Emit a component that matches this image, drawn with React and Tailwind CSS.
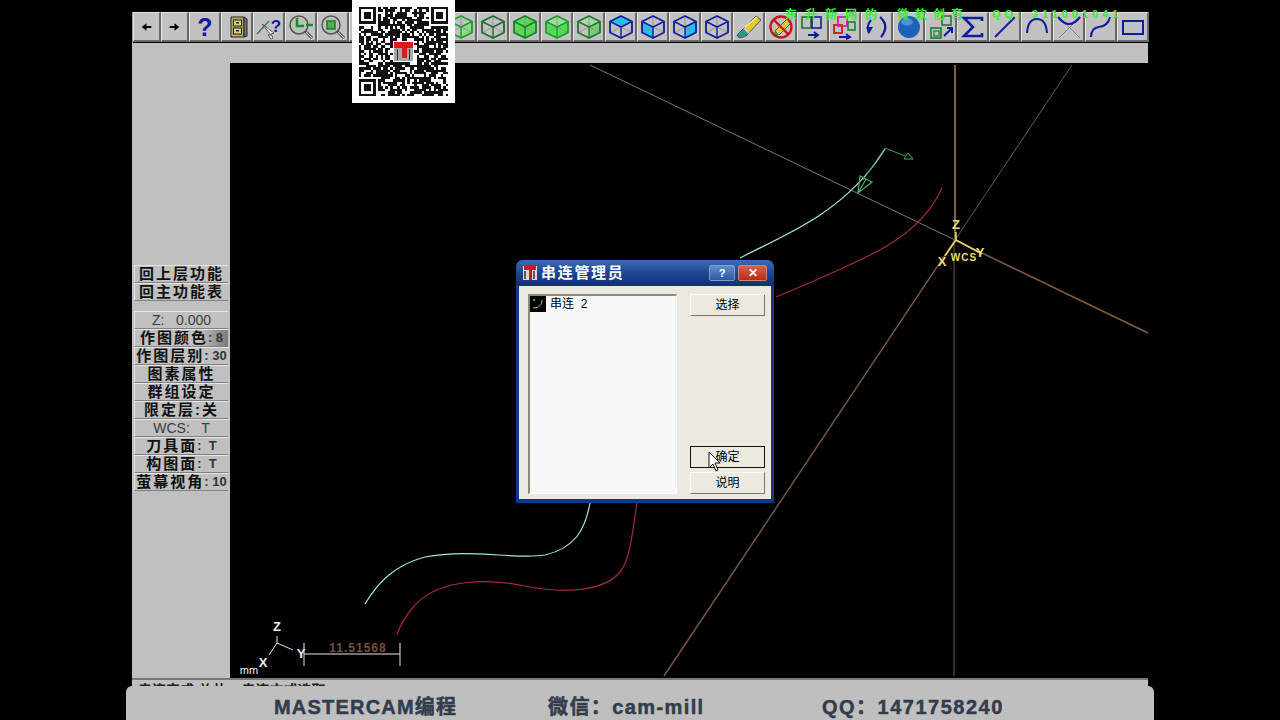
import React from 'react';

const cjk = { fontFamily: '"Liberation Sans", "Noto Sans CJK SC", sans-serif' };

// toolbar button, icons are drawn on a 26x26 grid
function Tool({ wide, children }) {
    return (
        <div className={`${wide ? 'w-[28px]' : 'w-[32px]'} h-[30px] shrink-0 flex items-center justify-center bg-[#c2c2c2] border-t border-l border-t-[#e4e4e4] border-l-[#e4e4e4] border-r-2 border-b-2 border-r-[#6a6a6a] border-b-[#6a6a6a]`}>
            <svg width="26" height="26" viewBox="0 0 26 26" fill="none">{children}</svg>
        </div>
    );
}

function Cube({ color, top, left, right, mid = '#8a8a8a' }) {
    return (
        <g strokeWidth="1.8" stroke={color} strokeLinejoin="round">
            {top && <path d="M13 2 L24 7.5 L13 13 L2 7.5 Z" fill={top} stroke="none" />}
            {left && <path d="M2 7.5 L13 13 L13 24 L2 18.5 Z" fill={left} stroke="none" />}
            {right && <path d="M24 7.5 L13 13 L13 24 L24 18.5 Z" fill={right} stroke="none" />}
            <path d="M2 18.5 L13 13 L24 18.5 M13 2 L13 13" stroke={mid} strokeWidth="0.8" />
            <path d="M2 7.5 L13 13 L24 7.5 M13 13 L13 24" strokeWidth="1.4" />
            <path d="M13 2 L24 7.5 L24 18.5 L13 24 L2 18.5 L2 7.5 Z" />
        </g>
    );
}

function Magnifier({ children }) {
    return (
        <g>
            <path d="M17 17 L24 24" stroke="#555" strokeWidth="3" />
            <path d="M17 17 L24 24" stroke="#ddd" strokeWidth="1" />
            <circle cx="11" cy="11" r="9" fill="#b8c4b8" stroke="#555" strokeWidth="1.5" />
            {children}
        </g>
    );
}

const cubes = [
    { color: '#1f9a2e', right: '#8fdc8f' },
    { color: '#1f6a2e' },
    { color: '#1f7a2e', top: '#55dd55', left: '#55dd55', right: '#55dd55' },
    { color: '#1f9a2e', left: '#55dd55', right: '#55dd55', top: '#9be09b' },
    { color: '#1f7a2e', right: '#7acb7a', top: '#a8d8a8' },
    { color: '#101c9c', top: '#22c0ee' },
    { color: '#101c9c', left: '#22c0ee' },
    { color: '#101c9c', right: '#22c0ee' },
    { color: '#101c9c' },
];

function Toolbar() {
    return (
        <div className="flex h-[31px] shrink-0 bg-black border-l border-[#999] items-start">
            <Tool wide><path d="M8 13 L13 9 L13 12 L18 12 L18 14 L13 14 L13 17 Z" fill="#000" /></Tool>
            <Tool wide><path d="M18 13 L13 9 L13 12 L8 12 L8 14 L13 14 L13 17 Z" fill="#000" /></Tool>
            <Tool><text x="13" y="22" textAnchor="middle" fontSize="25" fontWeight="700" fill="#1a1a9c" fontFamily="Liberation Sans">?</text></Tool>
            <Tool>
                <path d="M7 3 L20 3 L20 23 L7 23 Z" fill="#b8b060" stroke="#222" strokeWidth="1" />
                <path d="M20 3 L23 5 L23 22 L20 23 Z" fill="#777" stroke="#222" strokeWidth="1" />
                <rect x="9.5" y="6" width="8" height="6" fill="#d8d088" stroke="#222" />
                <rect x="9.5" y="14" width="8" height="6" fill="#d8d088" stroke="#222" />
                <rect x="12" y="8" width="3" height="1.5" fill="#222" />
                <rect x="12" y="16" width="3" height="1.5" fill="#222" />
            </Tool>
            <Tool>
                <path d="M1 20 L13 7" stroke="#2a7a3a" strokeWidth="1.2" />
                <path d="M6 10 L15 21 L12 21 L15 25 L17 24 L15 20 L18 19 Z" fill="#fff" stroke="#333" strokeWidth="0.8" />
                <text x="20" y="18" textAnchor="middle" fontSize="17" fontWeight="700" fill="#1a1a9c" fontFamily="Liberation Sans">?</text>
            </Tool>
            <Tool>
                <Magnifier>
                    <path d="M9 4 L9 12 L16 12" stroke="#1d8a2e" strokeWidth="2.5" />
                    <path d="M18 11 L25 11" stroke="#1d8a2e" strokeWidth="2.5" />
                </Magnifier>
            </Tool>
            <Tool>
                <Magnifier>
                    <rect x="7" y="7" width="8" height="8" fill="#4fb04f" stroke="#1d7a2e" strokeWidth="1.5" />
                </Magnifier>
            </Tool>
            {/* these three sit under the qr code */}
            <Tool /><Tool /><Tool />
            {cubes.map((c, i) => (
                <Tool key={i}><Cube {...c} /></Tool>
            ))}
            <Tool>
                <path d="M5 17 L20 2 L25 6 L10 22 Z" fill="#e8c832" stroke="#333" strokeWidth="0.8" />
                <path d="M9 13 L21 3" stroke="#fff2a0" strokeWidth="1.2" />
                <path d="M5 17 L8 14 L13 19 L10 22 Q2 26 1 21 Z" fill="#2a9a80" stroke="#225" strokeWidth="0.6" />
                <path d="M8 14 L13 19" stroke="#ccc" strokeWidth="2" />
            </Tool>
            <Tool>
                <path d="M7 17 L19 5 L23 9 L11 21 Z" fill="#e8c832" stroke="#333" strokeWidth="0.8" />
                <path d="M7 17 L11 21 Q6 24 5 21 Z" fill="#2a9a80" />
                <circle cx="13" cy="13" r="10.5" stroke="#c41818" strokeWidth="2.4" />
                <path d="M6 6 L20 20" stroke="#c41818" strokeWidth="2.4" />
            </Tool>
            <Tool>
                <rect x="2" y="3" width="9" height="11" stroke="#1d7a2e" strokeWidth="1.6" />
                <rect x="12" y="3" width="9" height="11" stroke="#101c9c" strokeWidth="1.6" />
                <path d="M8 21 L17 21 M14 18 L18 21 L14 24" stroke="#101c9c" strokeWidth="2" />
            </Tool>
            <Tool>
                <rect x="2" y="11" width="8" height="8" stroke="#d01818" strokeWidth="1.8" />
                <rect x="6" y="3" width="9" height="9" stroke="#c828a0" strokeWidth="1.8" />
                <rect x="16" y="8" width="7" height="8" stroke="#1d7a2e" strokeWidth="1.6" />
                <path d="M7 23 L17 23 M14 20 L18 23 L14 25" stroke="#101c9c" strokeWidth="2" />
            </Tool>
            <Tool>
                <path d="M7 6 Q2 12 5 19" stroke="#101c9c" strokeWidth="2" />
                <path d="M2 13 L9 13 L5 20 Z" fill="#101c9c" />
                <path d="M16 3 Q26 12 17 23" stroke="#101c9c" strokeWidth="2.2" />
            </Tool>
            <Tool>
                <circle cx="13" cy="13" r="11" fill="#1c62b8" />
                <ellipse cx="11" cy="8" rx="6" ry="3.5" fill="#4f90d8" />
            </Tool>
            <Tool>
                <rect x="3" y="14" width="10" height="10" stroke="#1d7a2e" strokeWidth="1.6" />
                <rect x="6" y="17" width="5" height="5" stroke="#1d7a2e" strokeWidth="1.2" />
                <rect x="14" y="2" width="9" height="9" stroke="#1d7a2e" strokeWidth="1.6" />
                <path d="M16 22 L23 15 M19 14 L24 14 L24 19" stroke="#101c9c" strokeWidth="2" />
            </Tool>
            <Tool><path d="M22 7 L22 4 L4 4 L13 13 L4 22 L22 22 L22 19" stroke="#101c9c" strokeWidth="2.6" /></Tool>
            <Tool>
                <path d="M3 23 L22 4" stroke="#101c9c" strokeWidth="2" />
                <circle cx="22" cy="4" r="1.2" fill="#333" />
            </Tool>
            <Tool><path d="M3 19 Q4 5 13 5 Q22 5 23 19" stroke="#101c9c" strokeWidth="2" /></Tool>
            <Tool>
                <path d="M3 3 L24 24 M24 3 L3 24" stroke="#777" strokeWidth="0.9" />
                <path d="M2 3 Q13 17 24 3" stroke="#101c9c" strokeWidth="2.2" />
            </Tool>
            <Tool><path d="M3 23 Q3 14 11 13 Q20 12 22 3" stroke="#101c9c" strokeWidth="2" /></Tool>
            <Tool><rect x="3" y="7" width="20" height="13" stroke="#101c9c" strokeWidth="2" /></Tool>
        </div>
    );
}

const menu = [
    { t: '回上层功能' },
    { t: '回主功能表' },
    { gap: true },
    { t: 'Z:   0.000', dim: true },
    { t: '作图颜色', v: ': 8', dark: true },
    { t: '作图层别', v: ': 30' },
    { t: '图素属性' },
    { t: '群组设定' },
    { t: '限定层:关' },
    { t: 'WCS:   T', dim: true },
    { t: '刀具面', v: ':  T' },
    { t: '构图面', v: ':  T' },
    { t: '萤幕视角', v: ': 10' },
];

function MenuItem({ item }) {
    if (item.gap) return <div className="h-[10px]" />;
    return (
        <div
            className={`h-[18px] flex items-center justify-center whitespace-pre border-t border-l border-t-[#e6e6e6] border-l-[#e6e6e6] border-b border-b-[#808080] ${item.dark ? 'bg-gradient-to-r from-[#c0c0c0] from-70% to-[#7c7c7c]' : 'bg-[#c0c0c0]'} ${item.dim ? 'text-[#3c3c3c] font-normal text-[14px]' : 'text-[#111] font-bold text-[15px] tracking-[2px]'}`}
            style={cjk}
        >
            {item.t}
            {item.v && <span className="text-[13px] tracking-normal text-[#333]">{item.v}</span>}
        </div>
    );
}

function Sidebar() {
    return (
        <div className="w-[98px] shrink-0 bg-[#c0c0c0] pt-[202px] pl-[2px] pr-[2px] flex flex-col">
            {menu.map((item, i) => <MenuItem key={i} item={item} />)}
        </div>
    );
}

function Viewport() {
    return (
        <div className="flex-1 bg-black relative overflow-hidden">
            <svg className="block" width="918" height="615" viewBox="230 63 918 615" fill="none" fontFamily="Liberation Sans">
                {/* construction lines */}
                <path d="M590 65 L955 240" stroke="#77776a" strokeWidth="1" />
                <path d="M955 240 L1148 333" stroke="#7c5a42" strokeWidth="1.6" />
                <path d="M955 65 L955 240" stroke="#7d6248" strokeWidth="2" />
                <path d="M954 240 L954 676" stroke="#6b5a4c" strokeWidth="1" />
                <path d="M664 676 L955 240" stroke="#7c5a42" strokeWidth="1.4" />
                <path d="M955 240 L1072 65" stroke="#5c5c5c" strokeWidth="1" />
                {/* chain */}
                <path d="M885 149 C872 170 850 195 820 215 C795 232 765 245 740 258" stroke="#a8e6dc" strokeWidth="1.2" />
                <path d="M590 503 C585 530 575 548 545 555 C515 560 470 548 425 557 C395 565 378 582 365 604" stroke="#a8e6dc" strokeWidth="1.2" />
                <path d="M942 188 C930 215 905 238 870 255 C840 270 805 285 776 297" stroke="#a02c34" strokeWidth="1.2" />
                <path d="M637 503 C632 535 630 560 620 572 C605 590 570 594 530 587 C490 578 440 578 415 605 C405 616 400 625 397 635" stroke="#a02c34" strokeWidth="1.2" />
                {/* chain direction arrows */}
                <path d="M885 148 L905 156" stroke="#3f9a5c" strokeWidth="1" />
                <path d="M908 153 L913 159 L904 159 Z" stroke="#4fae60" strokeWidth="1" />
                <path d="M885 148 L863 180" stroke="#3f9a5c" strokeWidth="1" />
                <path d="M858 193 L860 176 L872 182 Z M866 179 L858 193" stroke="#4fae60" strokeWidth="1.2" />
                {/* wcs */}
                <path d="M956 232 L956 240 M956 240 L982 254 M956 240 L945 256" stroke="#e6d26a" strokeWidth="1.6" />
                <g fill="#ecdc78" fontSize="13" fontWeight="700" textAnchor="middle">
                    <text x="956" y="229">Z</text>
                    <text x="942" y="266">X</text>
                    <text x="980" y="257">Y</text>
                    <text x="964" y="261" fontSize="10" letterSpacing="1">WCS</text>
                </g>
                {/* view axes and scale */}
                <path d="M277 636 L277 643 L293 650 M277 643 L269 655" stroke="#e4e4e4" strokeWidth="1" />
                <g fill="#f0f0f0" fontSize="13" fontWeight="700" textAnchor="middle">
                    <text x="277" y="631">Z</text>
                    <text x="263" y="667">X</text>
                    <text x="301" y="658">Y</text>
                    <text x="249" y="674" fontSize="11" fontWeight="400">mm</text>
                </g>
                <path d="M304 643 L304 666 M400 643 L400 666 M304 654 L400 654" stroke="#e8e8e8" strokeWidth="1" />
                <text x="358" y="652" textAnchor="middle" fill="#74503c" fontSize="12" fontWeight="700" letterSpacing="1">11.51568</text>
            </svg>
        </div>
    );
}

// same pseudo random pattern every run
function qrBits() {
    const size = 37;
    const cells = [];
    let seed = 1471758240;
    const finder = (x, y, ox, oy) => {
        const dx = x - ox, dy = y - oy;
        if (dx < -1 || dy < -1 || dx > 7 || dy > 7) return null;
        if (dx < 0 || dy < 0 || dx > 6 || dy > 6) return false;
        if (dx === 0 || dy === 0 || dx === 6 || dy === 6) return true;
        return dx >= 2 && dx <= 4 && dy >= 2 && dy <= 4;
    };
    for (let y = 0; y < size; y++) {
        for (let x = 0; x < size; x++) {
            seed = (seed * 1664525 + 1013904223) % 4294967296;
            const f = finder(x, y, 0, 0) ?? finder(x, y, 30, 0) ?? finder(x, y, 0, 30);
            const on = f === null ? (seed >>> 24) % 100 < 54 : f;
            if (on) cells.push([x, y]);
        }
    }
    return cells;
}

function QrCode() {
    return (
        <div className="absolute left-[352px] top-0 w-[103px] h-[103px] bg-white flex items-center justify-center">
            <svg width="89" height="89" viewBox="0 0 37 37" shapeRendering="crispEdges">
                {qrBits().map(([x, y]) => <rect key={`${x}-${y}`} x={x} y={y} width="1" height="1" fill="#111" />)}
                <rect x="14" y="14" width="9" height="9" fill="#fff" />
                <rect x="14.6" y="14.4" width="7.8" height="8" fill="#a8a8a8" />
                <path d="M14.6 14.4 L22.4 14.4 L22.4 17 L20 17 L20 21 L18 21 L18 17 L14.6 17 Z" fill="#d81c1c" />
                <path d="M16 17.5 L16 22 M21 17.5 L21 22" stroke="#333" strokeWidth="0.6" />
            </svg>
        </div>
    );
}

function DlgButton({ children, active }) {
    return (
        <button className={`w-[75px] h-[22px] flex items-center justify-center text-[12px] text-black bg-[#ece9e0] ${active ? 'border-[1.5px] border-[#111]' : 'border border-t-[#fff] border-l-[#fff] border-r-[#777] border-b-[#777]'}`} style={cjk}>
            {children}
        </button>
    );
}

function Dialog() {
    return (
        <div className="absolute left-[516px] top-[260px] w-[258px] h-[243px] flex flex-col rounded-t-[7px] bg-[#0f3a8c] px-[3px] pb-[4px] overflow-hidden">
            <div className="h-[26px] shrink-0 flex items-center -mx-[3px] px-[6px] bg-gradient-to-b from-[#3f6cb4] via-[#1c4590] to-[#14306e]">
                <svg width="16" height="16" viewBox="0 0 16 16" className="shrink-0">
                    <rect x="1" y="1" width="14" height="14" fill="#d8d8d8" />
                    <path d="M2 1 L14 1 L14 5 L10 5 L10 15 L7 15 L7 5 L2 5 Z" fill="#c81c1c" />
                    <path d="M3 6 L3 14 M12 6 L12 14" stroke="#333" strokeWidth="1.5" />
                </svg>
                <span className="ml-[3px] text-white font-bold text-[15px] tracking-[1.7px]" style={cjk}>串连管理员</span>
                <div className="ml-auto flex gap-[3px] items-center pr-[1px]">
                    <div className="w-[26px] h-[16px] rounded-[2px] bg-gradient-to-b from-[#5f8fc9] to-[#2a5aa8] border border-[#7f9fcc] flex items-center justify-center text-white text-[11px] font-bold" style={cjk}>?</div>
                    <div className="w-[29px] h-[16px] rounded-[2px] bg-gradient-to-b from-[#d8604a] to-[#b82818] border border-[#c88878] flex items-center justify-center text-white text-[12px] font-bold" style={cjk}>✕</div>
                </div>
            </div>
            <div className="flex-1 bg-[#ece9e0] flex pl-[9px] pr-[6px] pt-[8px] pb-[5px]">
                <div className="w-[149px] bg-[#f8f8f8] border-t-2 border-l-2 border-t-[#8c8a7c] border-l-[#8c8a7c] border-r border-b border-r-[#fff] border-b-[#fff]">
                    <div className="flex items-center gap-[4px]">
                        <svg width="16" height="16" viewBox="0 0 16 16" className="bg-black shrink-0">
                            <circle cx="4" cy="4" r="1" fill="#5fd06f" />
                            <path d="M12 4 C12 9 9 12 3 12" stroke="#7fe0a0" strokeWidth="1" fill="none" />
                        </svg>
                        <span className="text-[12px] leading-[14px] text-black whitespace-pre" style={cjk}>串连  2</span>
                    </div>
                </div>
                <div className="flex-1 flex flex-col items-end">
                    <DlgButton>选择</DlgButton>
                    <div className="flex-1" />
                    <div className="flex flex-col gap-[4px]">
                        <DlgButton active>确定</DlgButton>
                        <DlgButton>说明</DlgButton>
                    </div>
                </div>
            </div>
        </div>
    );
}

function Footer() {
    return (
        <div className="absolute left-[126px] top-[686px] w-[1028px] h-[34px] rounded-t-[6px] bg-[#bfbfbf] text-[#323d4c] font-bold text-[20px] leading-none [-webkit-text-stroke:0.5px_#323d4c]" style={cjk}>
            <div className="flex items-center h-[42px] pl-[148px]">
                <span className="w-[274px] tracking-[1.2px] whitespace-pre">MASTERCAM编程</span>
                <span className="w-[274px] tracking-[1.4px] whitespace-pre">微信：cam-mill</span>
                <span className="tracking-[1.5px] whitespace-pre">QQ：1471758240</span>
            </div>
        </div>
    );
}

function Watermark() {
    return (
        <div className="absolute left-[785px] top-[9px] flex font-bold leading-none text-[#33ee33] whitespace-pre text-[12px]" style={cjk}>
            <span className="w-[112px] tracking-[8px]">东升新网的</span>
            <span className="w-[95px] tracking-[6px]">微软创育</span>
            <span className="text-[11px] tracking-[4px]">QQ: 311001041</span>
        </div>
    );
}

export default function App() {
    return (
        <div className="relative w-[1280px] h-[720px] bg-black overflow-hidden">
            <div className="ml-[132px] w-[1016px] h-[720px] pt-[12px] flex flex-col">
                <Toolbar />
                <div className="h-[20px] bg-[#c0c0c0] shrink-0" />
                <div className="flex h-[615px] shrink-0">
                    <Sidebar />
                    <Viewport />
                </div>
                <div className="flex-1 bg-[#c0c0c0] border-t-2 border-[#777] pl-[6px] text-[14px] font-bold text-[#222] whitespace-pre" style={cjk}>串连完成 总共    串连方式选取</div>
            </div>
            <QrCode />
            <Watermark />
            <Dialog />
            <svg className="absolute left-[707px] top-[451px]" width="14" height="22" viewBox="0 0 14 22">
                <path d="M2 1 L2 17 L6 13 L9 20 L11 19 L8 12 L13 12 Z" fill="#fff" stroke="#111" strokeWidth="1" />
            </svg>
            <Footer />
        </div>
    );
}
